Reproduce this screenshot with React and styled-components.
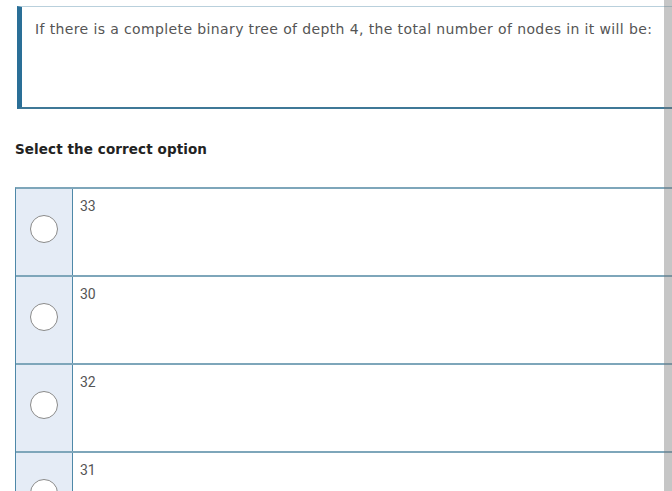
import React from 'react';
import styled, { createGlobalStyle } from 'styled-components';

const GlobalStyle = createGlobalStyle`
  html, body {
    margin: 0;
    padding: 0;
    background: #ffffff;
    overflow: hidden;
  }
  body {
    font-family: "DejaVu Sans", "Open Sans", sans-serif;
  }
`;

const options = ['33', '30', '32', '31'];

const App = () => {
  return (
    <>
      <GlobalStyle />
      <Page>
        <QuestionBox>
          <QuestionText>
            If there is a complete binary tree of depth 4, the total number of nodes in it will be:
          </QuestionText>
        </QuestionBox>
        <Heading>Select the correct option</Heading>
        <OptionList>
          {options.map((opt) => (
            <OptionRow key={opt}>
              <RadioCell>
                <Radio />
              </RadioCell>
              <AnswerCell>{opt}</AnswerCell>
            </OptionRow>
          ))}
        </OptionList>
      </Page>
      <ScrollBar />
    </>
  );
};

export default App;

const Page = styled.div`
  padding: 6px 0 0 15px;
  width: 680px;
  height: 491px;
  box-sizing: border-box;
  overflow: hidden;
`;

const QuestionBox = styled.div`
  margin-left: 2px;
  height: 103px;
  box-sizing: border-box;
  border-top: 1px solid #b9d0dc;
  border-left: 5px solid #2a6f97;
  border-bottom: 2px solid #3f7897;
  padding: 14px 13px;
`;

const QuestionText = styled.p`
  margin: 0;
  font-size: 14px;
  letter-spacing: 0.38px;
  color: #555555;
  white-space: nowrap;
`;

const Heading = styled.h3`
  margin: 32px 0 30px;
  font-size: 13.5px;
  letter-spacing: 0.1px;
  font-weight: 700;
  color: #222222;
`;

const OptionList = styled.div`
  display: flex;
  flex-direction: column;
  border-top: 2px solid #7ea6ba;
  border-left: 1px solid #4e88a8;
`;

const OptionRow = styled.div`
  display: flex;
  height: 86px;
  border-bottom: 2px solid #7ea6ba;
`;

const RadioCell = styled.div`
  width: 57px;
  flex: none;
  background: #e5ecf6;
  border-right: 1px solid #4e88a8;
  display: flex;
  justify-content: center;
  padding-top: 26px;
  box-sizing: border-box;
`;

const Radio = styled.span`
  width: 26px;
  height: 26px;
  border-radius: 50%;
  border: 1.5px solid #8a8a8a;
  background: #ffffff;
  display: block;
`;

const AnswerCell = styled.div`
  flex: 1;
  padding: 9px 7px;
  font-family: "Roboto", "Liberation Sans", sans-serif;
  font-size: 14px;
  color: #555555;
`;

const ScrollBar = styled.div`
  position: fixed;
  top: 0;
  right: 0;
  width: 8px;
  height: 100%;
  background: rgba(120, 120, 120, 0.42);
`;
